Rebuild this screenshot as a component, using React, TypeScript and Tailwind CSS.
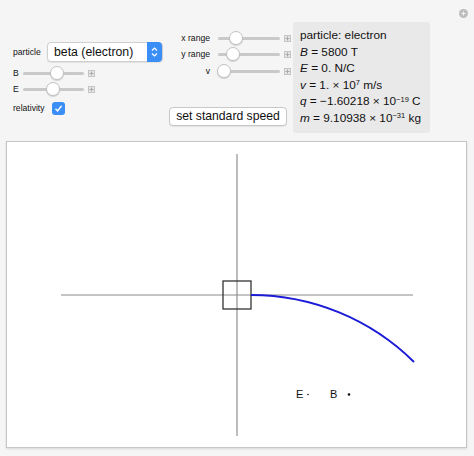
import React from 'react';

const font = { fontFamily: '"Liberation Sans", Arial, sans-serif' };

const PlusBox = () => (
  <span className="ml-[4px] flex h-[7px] w-[7px] items-center justify-center border border-[#c4c4c4] bg-[#e6e6e6]">
    <svg width="5" height="5" viewBox="0 0 5 5">
      <path d="M2.5 0.5v4M0.5 2.5h4" stroke="#a8a8a8" strokeWidth="1" />
    </svg>
  </span>
);

interface SliderProps {
  width: number;
  pos: number;
}

const Slider: React.FC<SliderProps> = ({ width, pos }) => (
  <div className="flex items-center">
    <div className="relative h-[3px] rounded-full bg-[#c9c9c9]" style={{ width }}>
      <div
        className="absolute top-1/2 h-[14px] w-[14px] -translate-x-1/2 -translate-y-1/2 rounded-full border border-[#c2c2c2] bg-white shadow-[0_1px_1px_rgba(0,0,0,0.15)]"
        style={{ left: pos }}
      />
    </div>
    <PlusBox />
  </div>
);

const Plot = () => (
  <svg width="459" height="305" viewBox="0 0 459 305" className="block">
    <line x1="230" y1="12" x2="230" y2="294" stroke="#9a9a9a" strokeWidth="1.3" />
    <line x1="54" y1="153" x2="406" y2="153" stroke="#8a8a8a" strokeWidth="1" />
    <rect x="216" y="139" width="28" height="28" fill="none" stroke="#333" strokeWidth="1.3" />
    <path d="M244 153 A 232 232 0 0 1 407 220" fill="none" stroke="#1c1cd8" strokeWidth="2" />
    <text x="289" y="256" fontSize="11" fill="#111" style={font}>E</text>
    <circle cx="301" cy="252.5" r="0.8" fill="#111" />
    <text x="323" y="256" fontSize="11" fill="#111" style={font}>B</text>
    <circle cx="342" cy="252.5" r="1.3" fill="#111" />
  </svg>
);

export default function App() {
  return (
    <div className="relative h-[456px] w-[474px] overflow-hidden bg-[#f5f5f5] text-[#111]" style={font}>
      {/* settings icon */}
      <div className="absolute left-[459px] top-[9px] flex h-[9px] w-[9px] items-center justify-center rounded-full bg-[#bdbdbd]">
        <svg width="5" height="5" viewBox="0 0 5 5">
          <path d="M2.5 0.5v4M0.5 2.5h4" stroke="#f5f5f5" strokeWidth="1.1" />
        </svg>
      </div>

      <div className="flex h-[141px]">
        {/* left controls */}
        <div className="ml-[13px] mt-[42px] flex flex-col">
          <div className="flex h-[20px] items-center">
            <span className="w-[34px] text-[8.6px]">particle</span>
            <div className="flex h-[20px] w-[116px] items-center rounded-[4px] border border-[#cfcfcf] bg-white pl-[6px] shadow-[0_1px_1px_rgba(0,0,0,0.08)]">
              <span className="flex-1 text-[12.3px]">beta (electron)</span>
              <div className="flex h-[20px] w-[15px] flex-col items-center justify-center rounded-r-[4px] bg-[#3b8ef5]">
                <svg width="7" height="12" viewBox="0 0 7 12">
                  <path d="M1 4.5 L3.5 2 L6 4.5 M1 7.5 L3.5 10 L6 7.5" fill="none" stroke="white" strokeWidth="1.2" />
                </svg>
              </div>
            </div>
          </div>
          <div className="mt-[4px] flex h-[14px] items-center">
            <span className="w-[10px] text-[8.6px]">B</span>
            <Slider width={61} pos={34} />
          </div>
          <div className="mt-[2px] flex h-[14px] items-center">
            <span className="w-[10px] text-[8.6px]">E</span>
            <Slider width={61} pos={30} />
          </div>
          <div className="mt-[6px] flex h-[13px] items-center">
            <span className="w-[39px] text-[8.6px]">relativity</span>
            <div className="flex h-[13px] w-[13px] items-center justify-center rounded-[3px] bg-[#3b8ef5]">
              <svg width="9" height="9" viewBox="0 0 9 9">
                <path d="M1.5 4.8 L3.6 7 L7.6 1.8" fill="none" stroke="white" strokeWidth="1.4" />
              </svg>
            </div>
          </div>
        </div>

        {/* middle controls */}
        <div className="ml-[7px] mt-[31px] flex flex-col">
          <div className="flex h-[14px] items-center">
            <span className="w-[48px] pr-[8px] text-right text-[8.6px]">x range</span>
            <Slider width={62} pos={18} />
          </div>
          <div className="mt-[2px] flex h-[14px] items-center">
            <span className="w-[48px] pr-[8px] text-right text-[8.6px]">y range</span>
            <Slider width={62} pos={15} />
          </div>
          <div className="mt-[3px] flex h-[14px] items-center">
            <span className="w-[48px] pr-[8px] text-right text-[8.6px]">v</span>
            <Slider width={62} pos={6} />
          </div>
          <div className="ml-[-1px] mt-[29px] flex h-[19px] w-[118px] items-center justify-center rounded-[4px] border border-[#c8c8c8] bg-white text-[12.2px] shadow-[0_1px_1px_rgba(0,0,0,0.08)]">
            set standard speed
          </div>
        </div>

        {/* info panel */}
        <div className="ml-[2px] mt-[22px] h-[111px] w-[137px] rounded-[3px] bg-[#e9e9e9] pl-[7px] pt-[5px] text-[11.8px] leading-[16.6px]">
          <div>particle: electron</div>
          <div><i>B</i> = 5800 T</div>
          <div><i>E</i> = 0. N/C</div>
          <div><i>v</i> = 1. × 10<sup className="text-[7.5px]">7</sup> m/s</div>
          <div><i>q</i> = −1.60218 × 10<sup className="text-[7.5px]">−19</sup> C</div>
          <div><i>m</i> = 9.10938 × 10<sup className="text-[7.5px]">−31</sup> kg</div>
        </div>
      </div>

      {/* plot */}
      <div className="ml-[6px] w-[461px] border border-[#c6c6c6] bg-white shadow-[0_1px_2px_rgba(0,0,0,0.12)]">
        <Plot />
      </div>
    </div>
  );
}
